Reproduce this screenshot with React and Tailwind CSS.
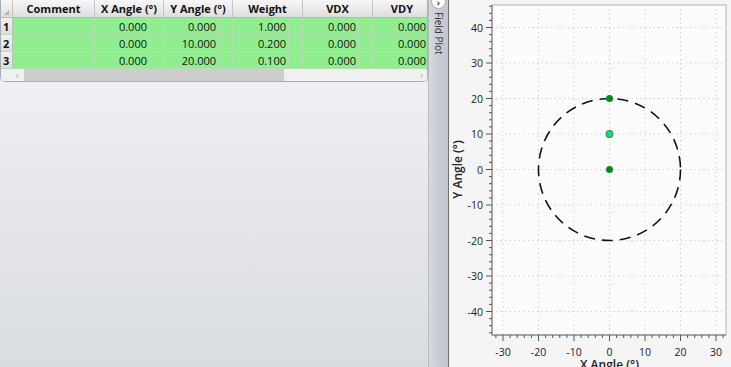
import React from "react"

const rows = [
  { id: 1, x: "0.000", y: "0.000", w: "1.000", vdx: "0.000", vdy: "0.000" },
  { id: 2, x: "0.000", y: "10.000", w: "0.200", vdx: "0.000", vdy: "0.000" },
  { id: 3, x: "0.000", y: "20.000", w: "0.100", vdx: "0.000", vdy: "0.000" },
]

// plot geometry (local to the right pane svg)
const PX = 3.55
const CX = 158.5
const CY = 169.5
const L = 41
const R = 275
const T = 5
const B = 335
const sx = (v) => CX + v * PX
const sy = (v) => CY - v * PX

function NumCell({ value, width }) {
  return (
    <div className={`flex h-full border-r border-[#b5dcae] ${width}`}>
      <div className="flex-1 text-right pr-[2px] border-r border-[#b5dcae] leading-[17px]">{value}</div>
      <div className="w-[13px]" />
    </div>
  )
}

function DataTable() {
  return (
    <div className="w-[428px] border border-t-0 border-[#a7adb5] rounded-b-[5px] overflow-hidden bg-white text-[11px] text-[#111]">
      <div className="flex h-[18px] bg-gradient-to-b from-[#f7f7f7] to-[#dedede] border-b border-[#b8b8b8] font-bold">
        <div className="w-[12px] border-r border-[#c4c4c4] relative">
          <div className="absolute left-[3px] bottom-[2px] w-0 h-0 border-l-[5px] border-l-transparent border-b-[5px] border-b-[#b0b0b0]" />
        </div>
        <div className="w-[82px] text-center leading-[18px] border-r border-[#c4c4c4]">Comment</div>
        <div className="w-[69px] text-center leading-[18px] border-r border-[#c4c4c4]">X Angle (°)</div>
        <div className="w-[69px] text-center leading-[18px] border-r border-[#c4c4c4]">Y Angle (°)</div>
        <div className="w-[70px] text-center leading-[18px] border-r border-[#c4c4c4]">Weight</div>
        <div className="w-[70px] text-center leading-[18px] border-r border-[#c4c4c4]">VDX</div>
        <div className="flex-1 text-right pr-[14px] leading-[18px]">VDY</div>
      </div>
      {rows.map((r) => (
        <div key={r.id} className="flex h-[17px] border-b border-[#b5dcae] bg-[#90ee90]">
          <div className="w-[12px] bg-gradient-to-b from-[#f2f2f2] to-[#dedede] border-r border-[#bdbdbd] font-bold pl-[2px] leading-[17px]">{r.id}</div>
          <div className="w-[82px] border-r border-[#b5dcae]" />
          <NumCell value={r.x} width="w-[69px]" />
          <NumCell value={r.y} width="w-[69px]" />
          <NumCell value={r.w} width="w-[70px]" />
          <NumCell value={r.vdx} width="w-[70px]" />
          <div className="flex-1 text-right pr-[1px] leading-[17px]">{r.vdy}</div>
        </div>
      ))}
      <div className="flex items-center h-[12px] bg-[#f0f0f0] text-[9px] text-[#a0a0a0]">
        <div className="w-[23px] pl-[15px] leading-[12px]">‹</div>
        <div className="w-[260px] h-full bg-[#cdcdcd]" />
        <div className="flex-1 text-right pr-[4px] leading-[12px]">›</div>
      </div>
    </div>
  )
}

function FieldPlot() {
  const grid = []
  for (let v = -30; v <= 30; v += 10) grid.push(<line key={"gx" + v} x1={sx(v)} x2={sx(v)} y1={T} y2={B} stroke="#c6c6c6" strokeDasharray="1 3.5" />)
  for (let v = -40; v <= 40; v += 10) grid.push(<line key={"gy" + v} x1={L} x2={R} y1={sy(v)} y2={sy(v)} stroke="#c6c6c6" strokeDasharray="1 3.5" />)

  const ticks = []
  for (let v = -46; v <= 46; v += 2) {
    const major = v % 10 === 0
    ticks.push(<line key={"ty" + v} x1={L - (major ? 6 : 3)} x2={L} y1={sy(v)} y2={sy(v)} stroke="#555" />)
  }
  for (let v = -32; v <= 32; v += 2) {
    const major = v % 10 === 0
    ticks.push(<line key={"tx" + v} x1={sx(v)} x2={sx(v)} y1={B} y2={B + (major ? 6 : 3)} stroke="#555" />)
  }

  const labels = []
  for (let v = -40; v <= 40; v += 10) labels.push(<text key={"ly" + v} x={L - 9} y={sy(v) + 4} textAnchor="end">{v}</text>)
  for (let v = -30; v <= 30; v += 10) labels.push(<text key={"lx" + v} x={sx(v)} y={356} textAnchor="middle">{v}</text>)

  return (
    <svg width="280" height="367" className="block" style={{ fontFamily: "'Open Sans', 'Noto Sans', sans-serif" }}>
      <rect x={L} y={T} width={R - L} height={B - T} fill="#fcfcfc" stroke="#b4b4b4" />
      {grid}
      <line x1={L} x2={L} y1={T} y2={B} stroke="#777" />
      <line x1={L} x2={R} y1={B} y2={B} stroke="#777" />
      {ticks}
      <g fontSize="10.5" fill="#222">{labels}</g>
      <text x={sx(0)} y={369} textAnchor="middle" fontSize="12" fontWeight="600" fill="#222">X Angle (°)</text>
      <text transform={`translate(11 ${CY}) rotate(-90)`} textAnchor="middle" fontSize="12" fontWeight="600" fill="#222">Y Angle (°)</text>
      <circle cx={CX} cy={CY} r={20 * PX} fill="none" stroke="#111" strokeWidth="1.6" strokeDasharray="11 7" />
      <circle cx={sx(0)} cy={sy(20)} r="3.5" fill="#0a8a1e" />
      <circle cx={sx(0)} cy={sy(10)} r="3.3" fill="#1fd39a" stroke="#22a43a" strokeWidth="1.2" />
      <circle cx={sx(0)} cy={sy(0)} r="3.5" fill="#0a8a1e" />
    </svg>
  )
}

export default function App() {
  return (
    <div className="flex w-[731px] h-[367px] overflow-hidden" style={{ fontFamily: "'Open Sans', 'Noto Sans', sans-serif" }}>
      <div className="w-[428px] h-full bg-gradient-to-b from-[#f4f5f7] to-[#d9dce0]">
        <DataTable />
      </div>
      <div className="w-[20px] h-full bg-gradient-to-r from-[#d6d9de] via-[#c9cdd3] to-[#c3c7cd] border-l border-[#b9bdc3] relative flex flex-col items-center">
        <div className="absolute -top-[6px] left-[2px] w-[15px] h-[15px] rounded-full bg-white border border-[#a9adb3] flex items-end justify-center text-[9px] leading-[10px] text-[#444] font-bold">›</div>
        <div className="mt-[12px] text-[10px] text-[#333]" style={{ writingMode: "vertical-rl" }}>Field Plot</div>
      </div>
      <div className="w-[3px] h-full bg-[#f4f4f4] border-l border-[#6f6f6f]" />
      <div className="flex-1 h-full bg-[#f5f5f5]">
        <FieldPlot />
      </div>
    </div>
  )
}
